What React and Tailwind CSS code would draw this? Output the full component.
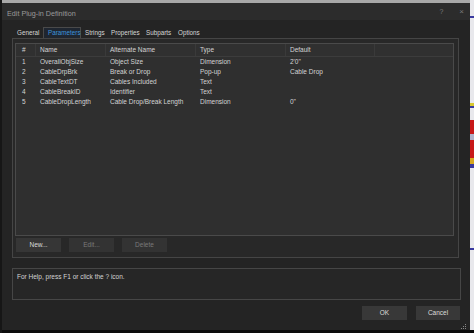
import React from "react";

const tabs = [
    { label: "General", w: "w-[31px]", pl: "pl-[5px]" },
    { label: "Parameters", w: "w-[38px]", pl: "pl-[4px]", active: true },
    { label: "Strings", w: "w-[26px]", pl: "pl-[4px]" },
    { label: "Properties", w: "w-[35px]", pl: "pl-[4px]" },
    { label: "Subparts", w: "w-[32px]", pl: "pl-[4px]" },
    { label: "Options", w: "w-[30px]", pl: "pl-[4px]" },
];

const rows = [
    ["1", "OverallObjSize", "Object Size", "Dimension", "2'0\""],
    ["2", "CableDrpBrk", "Break or Drop", "Pop-up", "Cable Drop"],
    ["3", "CableTextDT", "Cables Included", "Text", ""],
    ["4", "CableBreakID", "Identifier", "Text", ""],
    ["5", "CableDropLength", "Cable Drop/Break Length", "Dimension", "0\""],
];

const cols = ["w-[20px] pl-[6px]", "w-[70px] pl-[4px]", "w-[90px] pl-[4px]", "w-[90px] pl-[4px]", "w-[89px] pl-[4px]"];

const App = () => {
    return (
        <div className="w-[474px] h-[333px] flex overflow-hidden text-[6.5px] leading-none" style={{ fontFamily: "'Liberation Sans', Arial, sans-serif" }}>
            {/* dialog */}
            <div className="w-[470px] h-full flex flex-col bg-[#242424] border-l-2 border-[#161616]">
                <div className="h-[3px] bg-[#a8a8a8]"></div>
                <div className="h-[17px] bg-[#2c2c2c] flex items-center pl-[5px] pr-[6px]">
                    <span className="text-[7.2px] text-[#9a9a9a] mt-[4px]">Edit Plug-in Definition</span>
                    <span className="ml-auto text-[7px] text-[#7a7a7a] mr-[16px]">?</span>
                    <span className="text-[8px] text-[#7a7a7a]">×</span>
                </div>

                <div className="flex-1 flex flex-col pl-[10px]">
                    {/* tabs */}
                    <div className="flex mt-[7px] h-[11px] text-[6.3px] text-[#d6d6d6]">
                        {tabs.map(t => (
                            <div
                                key={t.label}
                                className={`${t.w} ${t.pl} flex items-center pt-[1px] ${t.active ? "bg-[#1f2630] border border-b-0 border-[#4a4a4a] text-[#3d95dc]" : ""}`}
                            >
                                {t.label}
                            </div>
                        ))}
                    </div>

                    {/* tab panel */}
                    <div className="w-[447px] h-[220px] border border-[#454545] bg-[#282828] flex flex-col pl-[2px]">
                        <div className="w-[439px] h-[193px] mt-[4px] border border-[#4a4a4a] bg-[#2f2f2f] text-[#d4d4d4]">
                            <div className="h-[13px] flex border-b border-[#3c3c3c] bg-[#303030]">
                                {["#", "Name", "Alternate Name", "Type", "Default"].map((h, i) => (
                                    <div key={h} className={`${cols[i]} flex items-center border-r border-[#3a3a3a]`}>{h}</div>
                                ))}
                                <div className="flex-1"></div>
                            </div>
                            {rows.map(r => (
                                <div key={r[0]} className="h-[10px] flex items-center">
                                    {r.map((c, i) => (
                                        <div key={i} className={`${cols[i]} whitespace-nowrap`}>{c}</div>
                                    ))}
                                </div>
                            ))}
                        </div>
                        <div className="flex gap-[8px] mt-[2px] pl-[1px]">
                            <button className="w-[45px] h-[14px] bg-[#363636] text-[#dcdcdc]">New...</button>
                            <button className="w-[45px] h-[14px] bg-[#333333] text-[#7a7a7a]">Edit...</button>
                            <button className="w-[45px] h-[14px] bg-[#333333] text-[#7a7a7a]">Delete</button>
                        </div>
                    </div>

                    {/* help box */}
                    <div className="w-[449px] h-[32px] mt-[10px] border border-[#464646] bg-[#262626] pl-[4px] pt-[5px] text-[#d4d4d4]">
                        For Help, press F1 or click the ? icon.
                    </div>

                    {/* footer buttons */}
                    <div className="flex gap-[9px] mt-[6px] pl-[350px]">
                        <button className="w-[45px] h-[14px] bg-[#383838] text-[#dcdcdc]">OK</button>
                        <button className="w-[44px] h-[14px] bg-[#383838] text-[#dcdcdc]">Cancel</button>
                    </div>
                    <div className="flex-1 flex items-end justify-end pr-[4px] pb-[1px]">
                        <svg width="5" height="5" viewBox="0 0 5 5" fill="#888">
                            <rect x="4" y="0" width="1" height="1" />
                            <rect x="2" y="2" width="1" height="1" />
                            <rect x="4" y="2" width="1" height="1" />
                            <rect x="0" y="4" width="1" height="1" />
                            <rect x="2" y="4" width="1" height="1" />
                            <rect x="4" y="4" width="1" height="1" />
                        </svg>
                    </div>
                </div>
                <div className="h-[3px] bg-[#0c0c0c]"></div>
            </div>

            {/* strip of the window behind */}
            <div className="w-[4px] h-full flex flex-col bg-[#e8e8ec]">
                <div className="h-[16px]"></div>
                <div className="h-[2px] bg-[#3a3aa0]"></div>
                <div className="h-[85px]"></div>
                <div className="h-[3px] bg-[#d8c830]"></div>
                <div className="h-[2px] bg-[#3a3aa0]"></div>
                <div className="h-[12px]"></div>
                <div className="h-[14px] bg-[#c81818]"></div>
                <div className="h-[6px] bg-[#b0b0c8]"></div>
                <div className="h-[18px] bg-[#c81818]"></div>
                <div className="h-[6px] bg-[#d8a820]"></div>
                <div className="h-[4px] bg-[#3a3aa0]"></div>
                <div className="h-[80px]"></div>
                <div className="h-[2px] bg-[#3a3aa0]"></div>
                <div className="flex-1"></div>
                <div className="h-[3px] bg-[#0c0c0c]"></div>
            </div>
        </div>
    );
};

export default App;
